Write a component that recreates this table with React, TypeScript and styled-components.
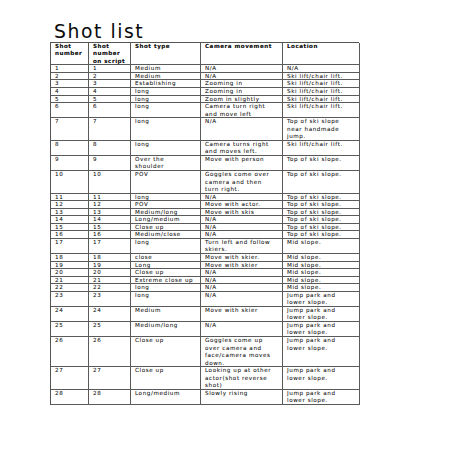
import React from "react";
import styled, { createGlobalStyle } from "styled-components";

const Global = createGlobalStyle`
  html, body { margin: 0; padding: 0; background: #ffffff; }
  body { font-family: "DejaVu Sans", sans-serif; color: #1a1a1a; }
`;

const Page = styled.div`
  width: 453px;
  height: 453px;
  padding: 20.7px 0 0 50px;
  box-sizing: border-box;
`;

const Title = styled.h1`
  margin: 0 0 0 4px;
  font-family: "DejaVu Sans", sans-serif;
  font-weight: 400;
  font-size: 18.8px;
  line-height: 21px;
  color: #0a0a0a;
  letter-spacing: 1.55px;
`;

const Table = styled.div`
  display: grid;
  grid-template-columns: 38px 42px 70px 82px 77px;
  width: 309px;
  border-top: 1px solid #555;
  border-left: 1px solid #555;
  box-sizing: border-box;
`;

const Cell = styled.div<{ $lines: number; $head?: boolean }>`
  height: ${(p) => p.$lines * 7.55}px;
  box-sizing: border-box;
  padding: 0 0 0 4px;
  box-shadow: inset -1px -1px 0 #5a5a5a;
  font-family: "DejaVu Sans", sans-serif;
  font-size: 5.6px;
  line-height: 7.55px;
  letter-spacing: ${(p) => (p.$head ? 0.5 : 0.6)}px;
  font-weight: ${(p) => (p.$head ? 700 : 400)};
  color: ${(p) => (p.$head ? "#111" : "#262626")};
  text-shadow: 0 0 0.25px rgba(0, 0, 0, 0.35);
  white-space: nowrap;
`;

const Line = styled.div``;

type Row = (string | string[])[];

const header: Row = [
  ["Shot", "number"],
  ["Shot", "number", "on script"],
  "Shot type",
  "Camera movement",
  "Location",
];

const JP = ["Jump park and", "lower slope."];

const rows: Row[] = [
  ["1", "1", "Medium", "N/A", "N/A"],
  ["2", "2", "Medium", "N/A", "Ski lift/chair lift."],
  ["3", "3", "Establishing", "Zooming in", "Ski lift/chair lift."],
  ["4", "4", "long", "Zooming in", "Ski lift/chair lift."],
  ["5", "5", "long", "Zoom in slightly", "Ski lift/chair lift."],
  ["6", "6", "long", ["Camera turn right", "and move left"], "Ski lift/chair lift."],
  ["7", "7", "long", "N/A", ["Top of ski slope", "near handmade", "jump."]],
  ["8", "8", "long", ["Camera turns right", "and moves left."], "Ski lift/chair lift."],
  ["9", "9", ["Over the", "shoulder"], "Move with person", "Top of ski slope."],
  ["10", "10", "POV", ["Goggles come over", "camera and then", "turn right."], "Top of ski slope."],
  ["11", "11", "long", "N/A", "Top of ski slope."],
  ["12", "12", "POV", "Move with actor.", "Top of ski slope."],
  ["13", "13", "Medium/long", "Move with skis", "Top of ski slope."],
  ["14", "14", "Long/medium", "N/A", "Top of ski slope."],
  ["15", "15", "Close up", "N/A", "Top of ski slope."],
  ["16", "16", "Medium/close", "N/A", "Top of ski slope."],
  ["17", "17", "long", ["Turn left and follow", "skiers."], "Mid slope."],
  ["18", "18", "close", "Move with skier.", "Mid slope."],
  ["19", "19", "Long", "Move with skier", "Mid slope."],
  ["20", "20", "Close up", "N/A", "Mid slope."],
  ["21", "21", "Extreme close up", "N/A", "Mid slope."],
  ["22", "22", "long", "N/A", "Mid slope."],
  ["23", "23", "long", "N/A", JP],
  ["24", "24", "Medium", "Move with skier", JP],
  ["25", "25", "Medium/long", "N/A", JP],
  ["26", "26", "Close up", ["Goggles come up", "over camera and", "face/camera moves", "down."], JP],
  ["27", "27", "Close up", ["Looking up at other", "actor(shot reverse", "shot)"], JP],
  ["28", "28", "Long/medium", "Slowly rising", JP],
];

const linesOf = (c: string | string[]) => (Array.isArray(c) ? c : [c]);

function renderRow(row: Row, key: string, head?: boolean) {
  const n = Math.max(...row.map((c) => linesOf(c).length));
  return row.map((c, i) => (
    <Cell key={`${key}-${i}`} $lines={n} $head={head}>
      {linesOf(c).map((l, j) => (
        <Line key={j}>{l}</Line>
      ))}
    </Cell>
  ));
}

export default function App() {
  return (
    <>
      <Global />
      <Page>
        <Title>Shot list</Title>
        <Table>
          {renderRow(header, "h", true)}
          {rows.map((r, i) => renderRow(r, `r${i}`))}
        </Table>
      </Page>
    </>
  );
}
